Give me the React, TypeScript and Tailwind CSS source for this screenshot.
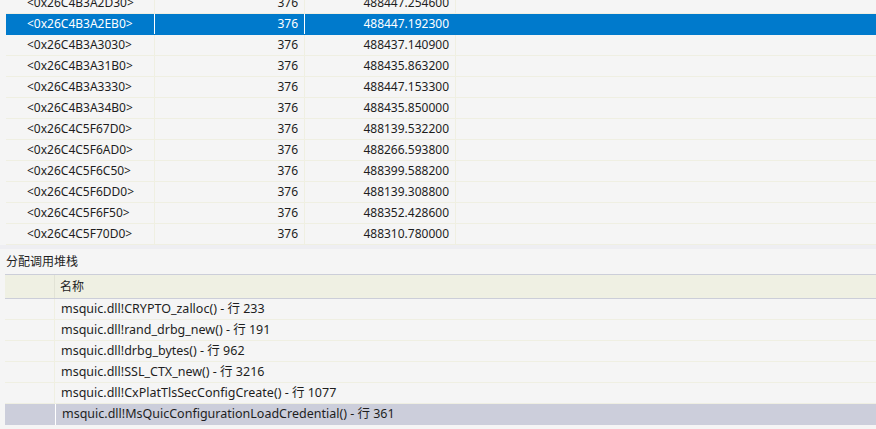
import React from "react";

const top = [
  ["<0x26C4B3A2D30>", "376", "488447.254600"],
  ["<0x26C4B3A2EB0>", "376", "488447.192300"],
  ["<0x26C4B3A3030>", "376", "488437.140900"],
  ["<0x26C4B3A31B0>", "376", "488435.863200"],
  ["<0x26C4B3A3330>", "376", "488447.153300"],
  ["<0x26C4B3A34B0>", "376", "488435.850000"],
  ["<0x26C4C5F67D0>", "376", "488139.532200"],
  ["<0x26C4C5F6AD0>", "376", "488266.593800"],
  ["<0x26C4C5F6C50>", "376", "488399.588200"],
  ["<0x26C4C5F6DD0>", "376", "488139.308800"],
  ["<0x26C4C5F6F50>", "376", "488352.428600"],
  ["<0x26C4C5F70D0>", "376", "488310.780000"],
];

const stack = [
  "msquic.dll!CRYPTO_zalloc() - 行 233",
  "msquic.dll!rand_drbg_new() - 行 191",
  "msquic.dll!drbg_bytes() - 行 962",
  "msquic.dll!SSL_CTX_new() - 行 3216",
  "msquic.dll!CxPlatTlsSecConfigCreate() - 行 1077",
  "msquic.dll!MsQuicConfigurationLoadCredential() - 行 361",
];

export default function App() {
  return (
    <div
      className="w-[876px] h-[429px] overflow-hidden bg-[#f5f5f5] text-[#1e1e1e] text-[12px]"
      style={{ fontFamily: '"Noto Sans", "Noto Sans CJK SC", sans-serif' }}
    >
      <div className="mt-[-7px] pl-[6px]">
        {top.map((r, i) => {
          const sel = i === 1;
          return (
            <div
              key={i}
              className={
                "flex h-[21px] border-b " +
                (sel ? "bg-[#007acc] text-white border-[#007acc]" : "border-[#efefe2]")
              }
            >
              <div className={"w-[149px] pl-[21px] leading-[20px] border-r " + (sel ? "border-white" : "border-[#efefe2]")}>
                {r[0]}
              </div>
              <div className={"w-[150px] pr-[6px] text-right leading-[20px] border-r " + (sel ? "border-white" : "border-[#efefe2]")}>
                {r[1]}
              </div>
              <div className={"w-[151px] pr-[6px] text-right leading-[20px] border-r " + (sel ? "border-[#007acc]" : "border-[#efefe2]")}>
                {r[2]}
              </div>
              <div className="flex-1" />
            </div>
          );
        })}
      </div>
      <div className="h-[4px] bg-[#eeeef2]" />
      <div className="h-[25px] pl-[6px] leading-[25px]">分配调用堆栈</div>
      <div className="ml-[5px] flex h-[25px] border-y border-[#ccced9] bg-[#eff0e3]">
        <div className="w-[50px] border-r border-[#e2e3d6]" />
        <div className="pl-[5px] leading-[23px]">名称</div>
      </div>
      <div className="ml-[5px] text-[12.5px]">
        {stack.map((s, i) => {
          const sel = i === stack.length - 1;
          return (
            <div
              key={i}
              className={
                "flex h-[21px] " +
                (sel ? "bg-[#cccedb]" : "border-b border-[#efefe2]")
              }
            >
              <div className={"w-[50px] border-r " + (sel ? "border-white ml-[1px] w-[49px]" : "border-[#efefe2]")} />
              <div className="pl-[6px] leading-[20px]">{s}</div>
            </div>
          );
        })}
      </div>
    </div>
  );
}
